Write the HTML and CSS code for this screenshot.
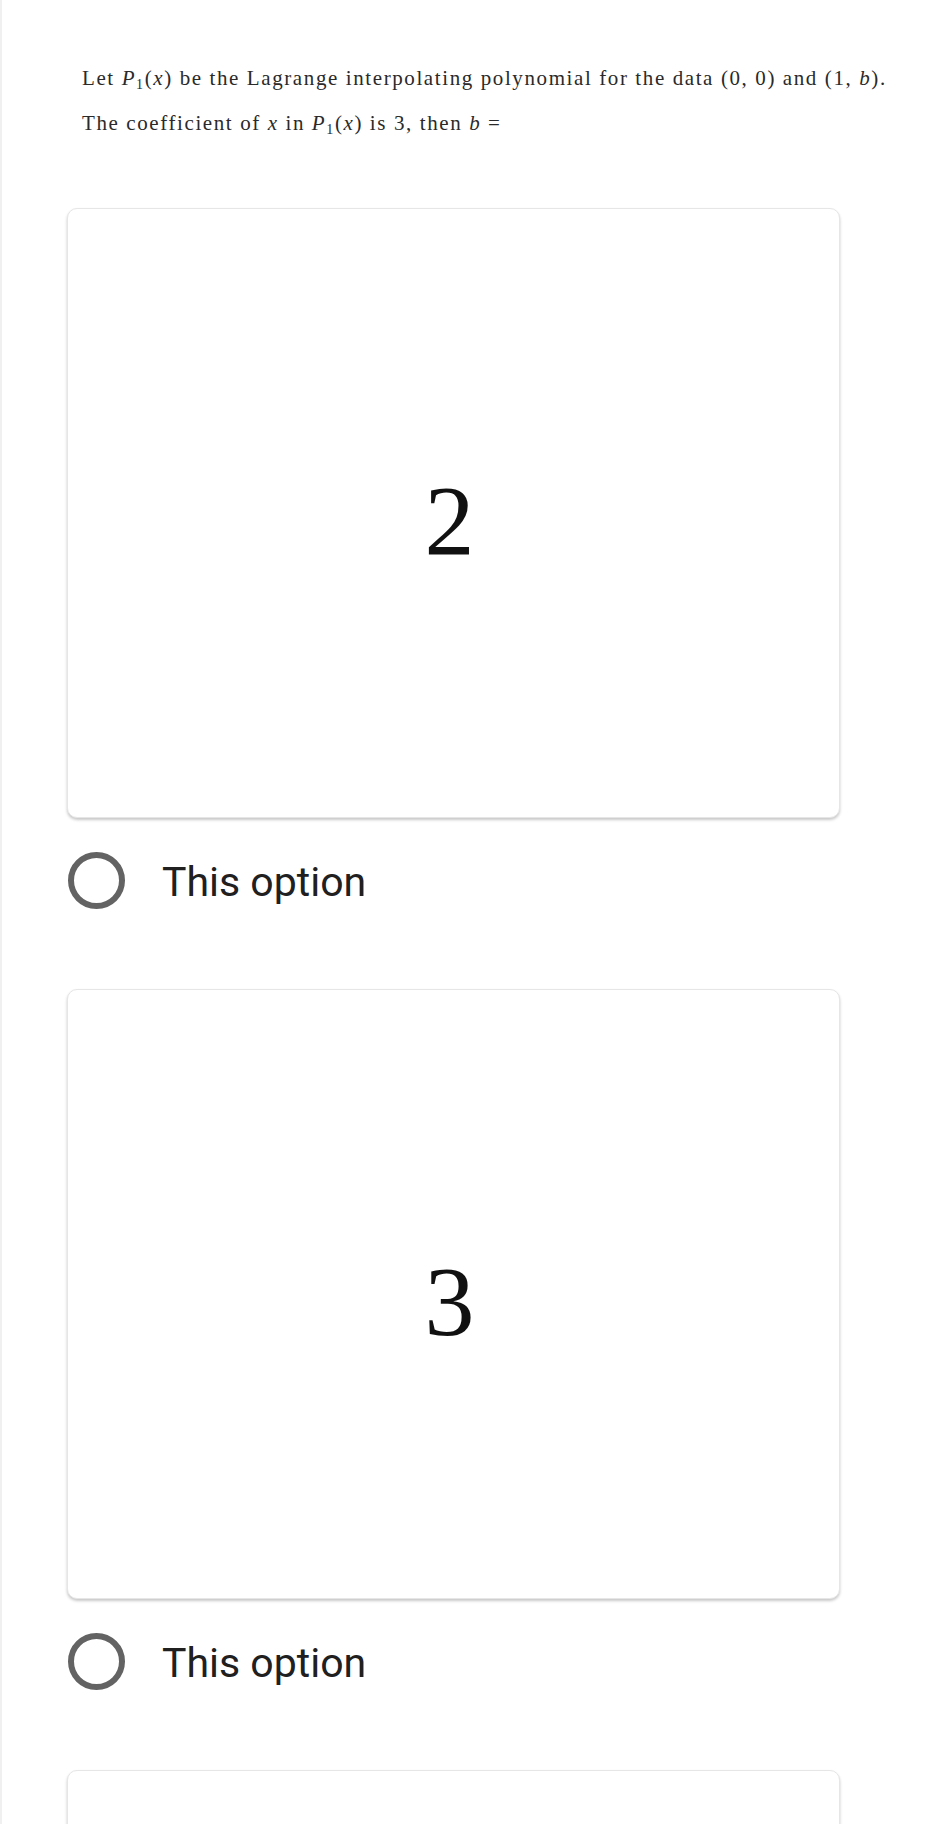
FILE: index.html
```html
<!DOCTYPE html>
<html>
<head>
<meta charset="utf-8">
<link rel="stylesheet" href="styles.css">
</head>
<body>
<div class="page">
  <div class="question">
    <p class="line">Let <i>P</i><sub>1</sub>(<i>x</i>) be the Lagrange interpolating polynomial for the data (0, 0) and (1, <i>b</i>).</p>
    <p class="line">The coefficient of <i>x</i> in <i>P</i><sub>1</sub>(<i>x</i>) is 3, then <i>b</i> =</p>
  </div>
  <div class="options">
    <div class="option">
      <div class="card"><span class="value">2</span></div>
      <label class="choice"><span class="radio"></span><span class="label">This option</span></label>
    </div>
    <div class="option">
      <div class="card"><span class="value">3</span></div>
      <label class="choice"><span class="radio"></span><span class="label">This option</span></label>
    </div>
    <div class="option">
      <div class="card"></div>
    </div>
  </div>
</div>
</body>
</html>
```

FILE: styles.css
```css
html, body {
  margin: 0;
  padding: 0;
  background: #ffffff;
}
body {
  height: 1824px;
  overflow: hidden;
}
.page {
  border-left: 2px solid #f0f0f0;
  min-height: 1824px;
  box-sizing: border-box;
}
.question {
  padding: 56px 0 0 80px;
  font-family: "Liberation Serif", "Times New Roman", serif;
  font-size: 21px;
  letter-spacing: 1.6px;
  color: #2a2a2a;
}
.line {
  margin: 0;
  line-height: 45px;
  white-space: nowrap;
}
.line sub {
  font-size: 14px;
  vertical-align: -4px;
  line-height: 0;
}
.options {
  margin: 62px 0 0 65px;
  width: 773px;
}
.option {
  margin-bottom: 80px;
}
.card {
  height: 610px;
  border-radius: 10px;
  background: #fff;
  border: 1px solid #e6e6e6;
  box-shadow: 0 2px 3px rgba(0, 0, 0, 0.22);
  box-sizing: border-box;
  display: flex;
  align-items: center;
  justify-content: center;
}
.value {
  font-family: "Liberation Serif", "Times New Roman", serif;
  font-size: 100px;
  color: #111;
  padding-top: 14px;
  padding-right: 8px;
}
.choice {
  margin-top: 34px;
  display: flex;
  align-items: center;
  gap: 37px;
  height: 57px;
}
.radio {
  width: 57px;
  height: 57px;
  box-sizing: border-box;
  border: 6px solid #636363;
  border-radius: 50%;
  flex: none;
  margin-left: 1px;
}
.label {
  font-family: Roboto, "Noto Sans", sans-serif;
  font-size: 41px;
  color: #202020;
  padding-top: 2px;
}
```
